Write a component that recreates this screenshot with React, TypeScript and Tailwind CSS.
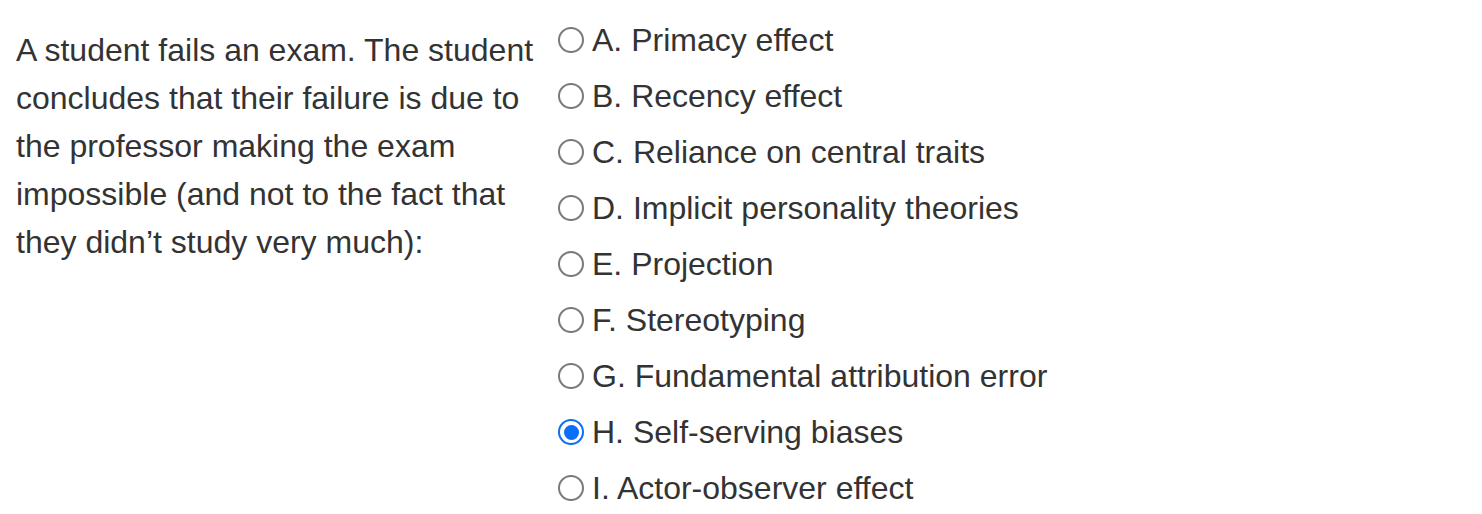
import React from 'react';

const options = [
  'A. Primacy effect',
  'B. Recency effect',
  'C. Reliance on central traits',
  'D. Implicit personality theories',
  'E. Projection',
  'F. Stereotyping',
  'G. Fundamental attribution error',
  'H. Self-serving biases',
  'I. Actor-observer effect',
];

const Radio = ({ checked }: { checked: boolean }) =>
  checked ? (
    <span className="w-[26px] h-[26px] rounded-full border-2 border-[#0b6ef7] bg-white flex items-center justify-center shrink-0">
      <span className="w-[15px] h-[15px] rounded-full bg-[#0b6ef7]" />
    </span>
  ) : (
    <span className="w-[26px] h-[26px] rounded-full border-2 border-[#7a7a7a] bg-white shrink-0" />
  );

export default function App() {
  return (
    <div
      className="w-[1482px] h-[514px] bg-white flex text-[#333] text-[32px] leading-[48px]"
      style={{ fontFamily: '"Liberation Sans", Arial, sans-serif' }}
    >
      {/* QUESTION */}
      <div className="w-[552px] pl-4 pr-2 pt-[26px] shrink-0">
        A student fails an exam. The student concludes that their failure is due to the professor making the exam
        impossible (and not to the fact that they didn’t study very much):
      </div>

      {/* CHOICES */}
      <div className="flex flex-col gap-2 pt-4">
        {options.map((o, i) => (
          <label key={o} className="flex items-center gap-2 pl-[6px]">
            <Radio checked={i === 7} />
            <span>{o}</span>
          </label>
        ))}
      </div>
    </div>
  );
}
